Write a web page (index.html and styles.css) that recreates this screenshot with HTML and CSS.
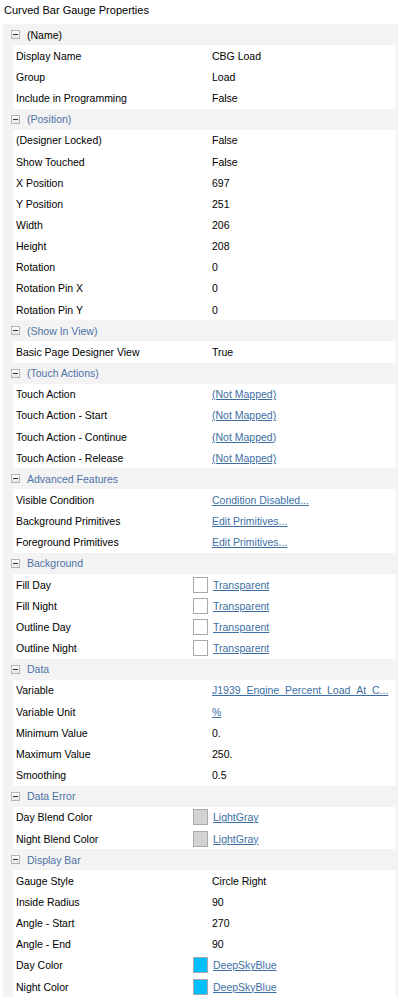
FILE: index.html
```html
<!DOCTYPE html>
<html lang="en">
<head>
    <meta charset="UTF-8">
    <meta name="viewport" content="width=device-width, initial-scale=1.0">
    <title>Curved Bar Gauge Properties</title>
    <link rel="stylesheet" href="styles.css">
</head>
<body>
    <div class="title">Curved Bar Gauge Properties</div>
    <div class="grid">
        <div class="category first"><span class="toggle"></span>(Name)</div>
        <div class="row"><span class="name">Display Name</span><span class="value">CBG Load</span></div>
        <div class="row"><span class="name">Group</span><span class="value">Load</span></div>
        <div class="row"><span class="name">Include in Programming</span><span class="value">False</span></div>

        <div class="category"><span class="toggle"></span>(Position)</div>
        <div class="row"><span class="name">(Designer Locked)</span><span class="value">False</span></div>
        <div class="row"><span class="name">Show Touched</span><span class="value">False</span></div>
        <div class="row"><span class="name">X Position</span><span class="value">697</span></div>
        <div class="row"><span class="name">Y Position</span><span class="value">251</span></div>
        <div class="row"><span class="name">Width</span><span class="value">206</span></div>
        <div class="row"><span class="name">Height</span><span class="value">208</span></div>
        <div class="row"><span class="name">Rotation</span><span class="value">0</span></div>
        <div class="row"><span class="name">Rotation Pin X</span><span class="value">0</span></div>
        <div class="row"><span class="name">Rotation Pin Y</span><span class="value">0</span></div>

        <div class="category"><span class="toggle"></span>(Show In View)</div>
        <div class="row"><span class="name">Basic Page Designer View</span><span class="value">True</span></div>

        <div class="category"><span class="toggle"></span>(Touch Actions)</div>
        <div class="row"><span class="name">Touch Action</span><span class="value"><a class="link">(Not Mapped)</a></span></div>
        <div class="row"><span class="name">Touch Action - Start</span><span class="value"><a class="link">(Not Mapped)</a></span></div>
        <div class="row"><span class="name">Touch Action - Continue</span><span class="value"><a class="link">(Not Mapped)</a></span></div>
        <div class="row"><span class="name">Touch Action - Release</span><span class="value"><a class="link">(Not Mapped)</a></span></div>

        <div class="category"><span class="toggle"></span>Advanced Features</div>
        <div class="row"><span class="name">Visible Condition</span><span class="value"><a class="link">Condition Disabled...</a></span></div>
        <div class="row"><span class="name">Background Primitives</span><span class="value"><a class="link">Edit Primitives...</a></span></div>
        <div class="row"><span class="name">Foreground Primitives</span><span class="value"><a class="link">Edit Primitives...</a></span></div>

        <div class="category"><span class="toggle"></span>Background</div>
        <div class="row"><span class="name">Fill Day</span><span class="value swatched"><span class="swatch"></span><a class="link">Transparent</a></span></div>
        <div class="row"><span class="name">Fill Night</span><span class="value swatched"><span class="swatch"></span><a class="link">Transparent</a></span></div>
        <div class="row"><span class="name">Outline Day</span><span class="value swatched"><span class="swatch"></span><a class="link">Transparent</a></span></div>
        <div class="row"><span class="name">Outline Night</span><span class="value swatched"><span class="swatch"></span><a class="link">Transparent</a></span></div>

        <div class="category"><span class="toggle"></span>Data</div>
        <div class="row"><span class="name">Variable</span><span class="value"><a class="link">J1939_Engine_Percent_Load_At_C...</a></span></div>
        <div class="row"><span class="name">Variable Unit</span><span class="value"><a class="link">%</a></span></div>
        <div class="row"><span class="name">Minimum Value</span><span class="value">0.</span></div>
        <div class="row"><span class="name">Maximum Value</span><span class="value">250.</span></div>
        <div class="row"><span class="name">Smoothing</span><span class="value">0.5</span></div>

        <div class="category"><span class="toggle"></span>Data Error</div>
        <div class="row"><span class="name">Day Blend Color</span><span class="value swatched"><span class="swatch gray"></span><a class="link">LightGray</a></span></div>
        <div class="row"><span class="name">Night Blend Color</span><span class="value swatched"><span class="swatch gray"></span><a class="link">LightGray</a></span></div>

        <div class="category"><span class="toggle"></span>Display Bar</div>
        <div class="row"><span class="name">Gauge Style</span><span class="value">Circle Right</span></div>
        <div class="row"><span class="name">Inside Radius</span><span class="value">90</span></div>
        <div class="row"><span class="name">Angle - Start</span><span class="value">270</span></div>
        <div class="row"><span class="name">Angle - End</span><span class="value">90</span></div>
        <div class="row"><span class="name">Day Color</span><span class="value swatched"><span class="swatch blue"></span><a class="link">DeepSkyBlue</a></span></div>
        <div class="row"><span class="name">Night Color</span><span class="value swatched"><span class="swatch blue"></span><a class="link">DeepSkyBlue</a></span></div>
    </div>
</body>
</html>
```

FILE: styles.css
```css
/* Page */
body {
    margin: 0;
    background: #ffffff;
    font-family: 'Liberation Sans', Arial, sans-serif;
    font-size: 10.5px;
    color: #000000;
}

.title {
    height: 24px;
    line-height: 20px;
    padding-left: 4px;
    font-size: 11px;
}

/* Property grid */
.grid {
    margin-left: 3px;
    width: 395px;
    background: #f3f3f3;
}

.category {
    height: 21.17px;
    display: flex;
    align-items: center;
    color: #4d72a6;
}

.category.first {
    color: #000000;
}

.toggle {
    box-sizing: border-box;
    width: 9px;
    height: 9px;
    margin: 0 7px 0 8px;
    border: 1px solid #b5b5b5;
    background: linear-gradient(#ffffff, #e6e6e6);
    position: relative;
}

.toggle::after {
    content: '';
    position: absolute;
    left: 1px;
    top: 3px;
    width: 5px;
    height: 1px;
    background: #333333;
}

.row {
    height: 21.17px;
    margin-left: 10px;
    margin-right: 2px;
    background: #ffffff;
    display: flex;
    align-items: center;
}

.name {
    width: 177px;
    padding-left: 3px;
    white-space: nowrap;
}

.value {
    padding-left: 19px;
    white-space: nowrap;
    display: flex;
    align-items: center;
}

.value.swatched {
    padding-left: 0;
}

.swatch {
    box-sizing: border-box;
    width: 15px;
    height: 16px;
    margin-right: 5px;
    border: 1px solid #a9a9a9;
    background: #ffffff;
}

.swatch.gray {
    background: #d3d3d3;
}

.swatch.blue {
    background: #00bfff;
}

.link {
    color: #3d6fa5;
    text-decoration: underline;
}
```
